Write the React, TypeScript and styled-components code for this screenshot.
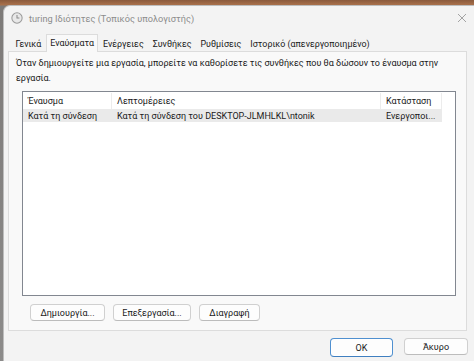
import styled, { createGlobalStyle } from 'styled-components';

const Global = createGlobalStyle`
  html, body {
    margin: 0;
    padding: 0;
  }
  body {
    width: 474px;
    height: 361px;
    overflow: hidden;
    background: linear-gradient(180deg, #8a5a3c 0px, #a9714b 5px, #7d7a78 6px, #8c8b8a 100%);
    font-family: Roboto, 'Noto Sans', sans-serif;
  }
`;

const Desktop = styled.div`
  height: 361px;
  padding: 5px 0 0 3px;
  box-sizing: border-box;
`;

const Window = styled.div`
  height: 100%;
  display: flex;
  flex-direction: column;
  background: #f3f3f3;
  border: 1px solid #bdbdbd;
  border-bottom: none;
  border-right: none;
  border-radius: 7px 0 0 0;
  box-sizing: border-box;
`;

const TitleBar = styled.div`
  height: 24px;
  display: flex;
  align-items: center;
  padding: 0 0 0 7px;
  gap: 6px;
  color: #8c8c8c;
  font-size: 9.2px;
`;

const Title = styled.span`
  flex: 1;
`;

const Close = styled.div`
  width: 24px;
  display: flex;
  justify-content: center;
  color: #9a9a9a;
`;

const Tabs = styled.div`
  display: flex;
  align-items: flex-end;
  margin-top: 6px;
  padding-left: 7px;
  height: 15px;
  position: relative;
  z-index: 1;
`;

const Tab = styled.div<{ $active?: boolean }>`
  font-size: 8.9px;
  color: #1a1a1a;
  padding: 0 3.5px;
  height: ${({ $active }) => ($active ? '17px' : '14px')};
  line-height: ${({ $active }) => ($active ? '16px' : '14px')};
  background: ${({ $active }) => ($active ? '#f9f9f9' : 'transparent')};
  border: 1px solid ${({ $active }) => ($active ? '#dcdcdc' : 'transparent')};
  border-bottom: none;
  margin-bottom: ${({ $active }) => ($active ? '-1px' : '0')};
  white-space: nowrap;
`;

const Panel = styled.div`
  margin: 0 7px 0 4px;
  height: 280px;
  background: #f9f9f9;
  border: 1px solid #dcdcdc;
  display: flex;
  flex-direction: column;
  padding: 4px 0 0 7px;
  box-sizing: border-box;
`;

const Description = styled.p`
  margin: 0;
  font-size: 9px;
  line-height: 15px;
  color: #1a1a1a;
  width: 445px;
`;

const List = styled.div`
  margin: 5px 0 0 6px;
  width: 434px;
  height: 205px;
  background: #ffffff;
  border: 1px solid #828790;
  box-sizing: border-box;
  font-size: 9px;
  color: #1a1a1a;
`;

const Row = styled.div<{ $head?: boolean; $selected?: boolean }>`
  display: grid;
  grid-template-columns: 89px 269px 61px;
  width: max-content;
  height: ${({ $head }) => ($head ? '16px' : '13px')};
  margin-top: ${({ $head }) => ($head ? '1px' : '0')};
  align-items: center;
  background: ${({ $selected }) => ($selected ? '#eaeaea' : 'transparent')};
`;

const HeadCell = styled.div`
  padding-left: 5px;
  height: 100%;
  display: flex;
  align-items: center;
  border-right: 1px solid #ececec;
  white-space: nowrap;
  overflow: hidden;
`;

const Cell = styled.div`
  padding-left: 5px;
  white-space: nowrap;
  overflow: hidden;
`;

const ButtonRow = styled.div`
  display: flex;
  gap: 8px;
  margin: 8px 0 0 14px;
`;

const Button = styled.button<{ $primary?: boolean; $w: number }>`
  width: ${({ $w }) => $w}px;
  height: ${({ $primary }) => ($primary ? '19px' : '17px')};
  font-family: inherit;
  font-size: 9px;
  color: #1a1a1a;
  background: #fdfdfd;
  border: 1px solid ${({ $primary }) => ($primary ? '#4f90d0' : '#d0d0d0')};
  border-bottom-color: ${({ $primary }) => ($primary ? '#3f7fc0' : '#bcbcbc')};
  border-radius: 4px;
  padding: 0;
  box-shadow: ${({ $primary }) => ($primary ? 'inset 0 0 0 1px #fff' : 'none')};
`;

const Footer = styled.div`
  flex: 1;
  display: flex;
  justify-content: flex-end;
  align-items: flex-start;
  gap: 11px;
  padding: 7px 6px 0 0;
`;

const ClockIcon = () => (
  <svg width="12" height="12" viewBox="0 0 14 14">
    <circle cx="7" cy="7" r="6" fill="#e8e8e8" stroke="#9a9a9a" strokeWidth="1.2" />
    <path d="M7 3.5V7h2.8" fill="none" stroke="#8a8a8a" strokeWidth="1.2" />
  </svg>
);

const CloseIcon = () => (
  <svg width="10" height="10" viewBox="0 0 10 10">
    <path d="M1 1l8 8M9 1l-8 8" stroke="#9a9a9a" strokeWidth="0.9" />
  </svg>
);

export default function App() {
  return (
    <>
      <Global />
      <Desktop>
        <Window>
          <TitleBar>
            <ClockIcon />
            <Title>turing Ιδιότητες (Τοπικός υπολογιστής)</Title>
            <Close>
              <CloseIcon />
            </Close>
          </TitleBar>
          <Tabs>
            <Tab>Γενικά</Tab>
            <Tab $active>Εναύσματα</Tab>
            <Tab>Ενέργειες</Tab>
            <Tab>Συνθήκες</Tab>
            <Tab>Ρυθμίσεις</Tab>
            <Tab>Ιστορικό (απενεργοποιημένο)</Tab>
          </Tabs>
          <Panel>
            <Description>
              Όταν δημιουργείτε μια εργασία, μπορείτε να καθορίσετε τις συνθήκες που θα δώσουν το έναυσμα στην
              εργασία.
            </Description>
            <List>
              <Row $head>
                <HeadCell>Έναυσμα</HeadCell>
                <HeadCell>Λεπτομέρειες</HeadCell>
                <HeadCell>Κατάσταση</HeadCell>
              </Row>
              <Row $selected>
                <Cell>Κατά τη σύνδεση</Cell>
                <Cell>Κατά τη σύνδεση του DESKTOP-JLMHLKL\ntonik</Cell>
                <Cell>Ενεργοποι...</Cell>
              </Row>
            </List>
            <ButtonRow>
              <Button $w={75}>Δημιουργία...</Button>
              <Button $w={78}>Επεξεργασία...</Button>
              <Button $w={61}>Διαγραφή</Button>
            </ButtonRow>
          </Panel>
          <Footer>
            <Button $primary $w={63}>OK</Button>
            <Button $w={64}>Άκυρο</Button>
          </Footer>
        </Window>
      </Desktop>
    </>
  );
}
